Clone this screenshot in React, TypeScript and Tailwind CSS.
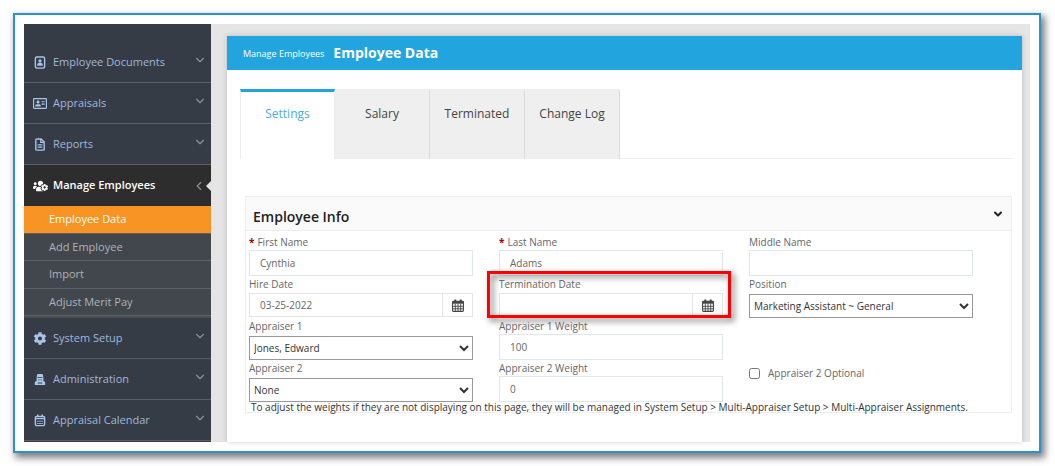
import { useState } from "react";
import type { ComponentType, ReactNode } from "react";
import { ChevronDown, ChevronLeft } from "lucide-react";
import { FaRegAddressCard, FaUsersCog, FaCog } from "react-icons/fa";

type IconProps = { className?: string };

interface NavItem {
  label: string;
  icon: ComponentType<IconProps>;
}

function PortraitIcon({ className }: IconProps) {
  return (
    <svg viewBox="0 0 12 14" className={className} fill="none">
      <rect x="1" y="1" width="10" height="12" rx="1.6" stroke="currentColor" strokeWidth="1.5" />
      <circle cx="6" cy="5.2" r="1.7" fill="currentColor" />
      <path d="M3 10.6V9.6C3 8 4.3 7.4 6 7.4s3 .6 3 2.200v1z" fill="currentColor" />
    </svg>
  );
}

function ReportIcon({ className }: IconProps) {
  return (
    <svg viewBox="0 0 12 14" className={className} fill="none" stroke="currentColor">
      <path d="M2.500 1h4.700L10.500 4.300V12c0 .6-.4 1-1 1h-7c-.6 0-1-.4-1-1V2c0-.6.4-1 1-1z" strokeWidth="1.500" />
      <path d="M6.800 1v3.700h3.700" strokeWidth="1.300" />
      <path d="M3.500 7.500h5M3.500 9.900h5" strokeWidth="1.400" />
    </svg>
  );
}

function AdminIcon({ className }: IconProps) {
  return (
    <svg viewBox="0 0 12 14" className={className}>
      <path fill="currentColor" fillRule="evenodd" d="M4.200 1h3.600c.9 0 1.400.6 1.500 1.400l.5 4.800c0 .6-.1 1-.3 1.400 1.400.4 2.200 1.200 2.200 2.500V12c0 .6-.4 1-1 1H1.300c-.6 0-1-.4-1-1v-.9c0-1.300.8-2.100 2.200-2.500-.2-.4-.3-.8-.3-1.400l.5-4.800C2.800 1.600 3.300 1 4.200 1zM3.400 4.600v.9h5.200v-.9zM4 7v.9h1.400V7zm2.600 0v.9H8V7zM3.600 10.200v1h4.800v-1z" />
    </svg>
  );
}

function ScheduleIcon({ className }: IconProps) {
  return (
    <svg viewBox="0 0 12 14" className={className} fill="none" stroke="currentColor">
      <rect x="1" y="2.500" width="10" height="10" rx="1.400" strokeWidth="1.500" />
      <path d="M1 4.800h10" strokeWidth="1.600" />
      <path d="M3.600.6v2.400M8.400.6v2.400" strokeWidth="1.600" />
      <path d="M3 7.800h6M3 10.200h6" strokeWidth="1.200" strokeDasharray="1.600 .6" />
    </svg>
  );
}

function CalendarIcon({ className }: IconProps) {
  return (
    <svg viewBox="0 0 12 13" className={className} fill="none" stroke="currentColor">
      <rect x=".6" y="2.200" width="10.800" height="10.200" rx=".8" strokeWidth="1.100" />
      <path d="M.6 3.400h10.800" strokeWidth="2.600" />
      <path d="M3.300.4v3M8.700.4v3" strokeWidth="2" />
      <path d="M3.300 4.600v7.800M6 4.600v7.800M8.700 4.600v7.800M.6 7.300h10.800M.6 9.800h10.800" strokeWidth=".9" />
    </svg>
  );
}

const topItems: NavItem[] = [
  { label: "Employee Documents", icon: PortraitIcon },
  { label: "Appraisals", icon: FaRegAddressCard },
  { label: "Reports", icon: ReportIcon },
];

const bottomItems: NavItem[] = [
  { label: "System Setup", icon: FaCog },
  { label: "Administration", icon: AdminIcon },
  { label: "Appraisal Calendar", icon: ScheduleIcon },
];

const subItems = ["Employee Data", "Add Employee", "Import", "Adjust Merit Pay"];
const tabs = ["Settings", "Salary", "Terminated", "Change Log"];

const inputClass = "block h-[26px] w-full border border-[#dfe6ec] bg-white px-[10px] text-[10px] text-[#666] outline-none";
const selectClass = "block h-6 w-full border border-[#999] bg-white text-[10px] text-[#333] outline-none";

function NavLink({ label, icon: Icon }: NavItem) {
  return (
    <a href="#" className="flex h-[41px] items-center border-b border-[#5d6166] pl-[9px] pr-1 text-[11px] font-medium text-[#9fb8dc]">
      <Icon className="h-[13px] w-[14px] shrink-0 text-[#a9c4e8]" />
      <span className="ml-[6px] flex-1">{label}</span>
      <ChevronDown className="mb-1 h-[14px] w-[14px] text-[#8b8f94]" strokeWidth={2} />
    </a>
  );
}

function Sidebar() {
  const [active, setActive] = useState("Employee Data");

  return (
    <nav className="w-[187px] shrink-0 bg-[#353c46] pt-[18px]">
      {topItems.map((item) => <NavLink key={item.label} {...item} />)}
      <a href="#" className="relative flex h-[41px] items-center bg-[#2d2d2d] pl-[9px] pr-[5px] text-[11px] font-semibold text-white">
        <FaUsersCog className="h-[14px] w-[15px] shrink-0" />
        <span className="ml-[5px] flex-1">Manage Employees</span>
        <ChevronLeft className="h-[14px] w-[14px] text-[#8b8f94]" strokeWidth={2} />
        <span className="absolute right-0 top-1/2 -translate-y-1/2 border-y-[5px] border-r-[5px] border-y-transparent border-r-[#e5e5e5]" />
      </a>
      <ul className="border-b-2 border-[#4b4f55]">
        {subItems.map((label) => (
          <li key={label} className="odd:h-7 even:h-[27px]">
            <button
              onClick={() => setActive(label)}
              className={`block h-full w-full border-b border-[#5d6166] pl-[25px] text-left text-[11px] ${active === label ? "bg-[#f79423] text-white" : "bg-[#42474d] text-[#aeb2b8]"}`}
            >
              {label}
            </button>
          </li>
        ))}
      </ul>
      {bottomItems.map((item) => <NavLink key={item.label} {...item} />)}
    </nav>
  );
}

interface FieldProps {
  id: string;
  label: string;
  required?: boolean;
  highlight?: boolean;
  children: ReactNode;
}

function Field({ id, label, required, highlight, children }: FieldProps) {
  return (
    <div className="relative pr-[26px]">
      <label htmlFor={id} className="block h-4 text-[10px] leading-4 text-[#666]">
        {required && <span className="mr-[3px] font-bold text-[#a00]">*</span>}
        {label}
      </label>
      {children}
      {highlight && (
        <div className="pointer-events-none absolute -left-3 -top-[5px] right-[18px] h-[47px] border-3 border-[#f00] drop-shadow-[3px_3px_3px_rgba(0,0,0,0.6)]" />
      )}
    </div>
  );
}

function DateField({ id, value }: { id: string; value: string }) {
  return (
    <div className="flex h-[26px] items-center">
      <input id={id} defaultValue={value} className="h-6 min-w-0 flex-1 border border-[#e5e5e5] px-[10px] text-[10px] text-[#666] outline-none" />
      <button type="button" aria-label="Pick a date" className="flex h-6 w-[30px] items-center justify-center border border-l-0 border-[#e5e5e5] text-[#444]">
        <CalendarIcon className="h-[13px] w-3" />
      </button>
    </div>
  );
}

function SelectField({ id, options }: { id: string; options: string[] }) {
  return (
    <div className="flex h-[26px] items-end">
      <select id={id} className={selectClass}>
        {options.map((option) => <option key={option}>{option}</option>)}
      </select>
    </div>
  );
}

function EmployeeInfo() {
  return (
    <section className="ml-[5px] border border-[#ededed]">
      <div className="flex h-[34px] items-center border-b border-[#ededed] bg-[#fafafa] pl-[7px] pr-[7px]">
        <h2 className="flex-1 pt-[6px] text-[14px] font-semibold leading-5 text-[#222]">Employee Info</h2>
        <button type="button" aria-label="Collapse">
          <ChevronDown className="h-3 w-3 text-[#222]" strokeWidth={4} />
        </button>
      </div>
      <form className="pl-[3px] pr-3 pt-[3px]">
        <div className="grid grid-cols-3">
          <Field id="first" label="First Name" required>
            <input id="first" defaultValue="Cynthia" className={inputClass} />
          </Field>
          <Field id="last" label="Last Name" required>
            <input id="last" defaultValue="Adams" className={inputClass} />
          </Field>
          <Field id="middle" label="Middle Name">
            <input id="middle" className={inputClass} />
          </Field>
          <Field id="hire" label="Hire Date">
            <DateField id="hire" value="03-25-2022" />
          </Field>
          <Field id="termination" label="Termination Date" highlight>
            <DateField id="termination" value="" />
          </Field>
          <Field id="position" label="Position">
            <SelectField id="position" options={["Marketing Assistant ~ General"]} />
          </Field>
          <Field id="appraiser1" label="Appraiser 1">
            <SelectField id="appraiser1" options={["Jones, Edward"]} />
          </Field>
          <Field id="weight1" label="Appraiser 1 Weight">
            <input id="weight1" defaultValue="100" className={inputClass} />
          </Field>
          <div />
          <Field id="appraiser2" label="Appraiser 2">
            <SelectField id="appraiser2" options={["None"]} />
          </Field>
          <Field id="weight2" label="Appraiser 2 Weight">
            <input id="weight2" defaultValue="0" className={inputClass} />
          </Field>
          <label className="flex h-[26px] items-center gap-2 text-[10px] text-[#666]">
            <input type="checkbox" className="h-[11px] w-[11px]" />
            Appraiser 2 Optional
          </label>
        </div>
        <p className="h-[10px] whitespace-nowrap pl-[2px] text-[10px] leading-[10px] text-[#333]">
          To adjust the weights if they are not displaying on this page, they will be managed in System Setup &gt; Multi-Appraiser Setup &gt; Multi-Appraiser Assignments.
        </p>
      </form>
    </section>
  );
}

export default function App() {
  const [tab, setTab] = useState("Settings");

  return (
    <div className="min-h-screen bg-white pb-[14px] pl-[13px] pr-[14px] pt-[13px] font-['Open_Sans',sans-serif]">
      <div className="border-2 border-[#2a93c9] bg-white p-[9px] shadow-[3px_4px_7px_1px_rgba(0,0,0,0.5)]">
        <div className="flex bg-[#e5e5e5]">
          <Sidebar />
          <main className="ml-4 mr-2 mt-3 min-w-0 flex-1 bg-white shadow-[0_0_5px_rgba(0,0,0,0.2)]">
            <header className="flex h-[34px] items-center gap-[9px] bg-[#22a5df] pb-[2px] pl-4 text-white">
              <a href="#" className="pt-1 text-[9px]">Manage Employees</a>
              <h1 className="text-[14px] font-bold">Employee Data</h1>
            </header>
            <div className="pb-[29px] pl-[13px] pr-[10px] pt-[19px]">
              <div role="tablist" className="mb-[37px] flex border-b border-[#ededed]">
                {tabs.map((name) => (
                  <button
                    key={name}
                    role="tab"
                    aria-selected={tab === name}
                    onClick={() => setTab(name)}
                    className={`-mb-px h-[70px] w-[95px] border-r border-t-3 pb-6 text-[12px] font-medium ${tab === name ? "border-l border-x-[#ededed] border-t-[#22a5df] bg-white text-[#4badde]" : "border-r-[#dcdcdc] border-t-[#efefef] bg-[#efefef] text-[#444]"}`}
                  >
                    {name}
                  </button>
                ))}
              </div>
              <EmployeeInfo />
            </div>
          </main>
        </div>
      </div>
    </div>
  );
}
